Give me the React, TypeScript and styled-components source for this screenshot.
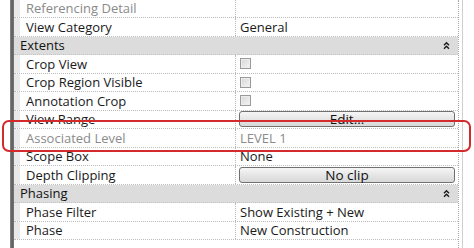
import styled, { createGlobalStyle } from "styled-components";

const Global = createGlobalStyle`
  html, body {
    margin: 0;
    padding: 0;
    background: #ffffff;
  }
  body {
    font-family: "Open Sans", "Noto Sans", "DejaVu Sans", sans-serif;
    font-size: 13px;
    color: #1c1c1c;
  }
`;

const Screen = styled.div`
  position: relative;
  width: 474px;
  height: 248px;
  overflow: hidden;
  display: flex;
  background: #ffffff;
`;

const Rail = styled.div`
  width: 4px;
  margin-left: 10px;
  background: linear-gradient(to right, #8a8a8a, #5c5c5c 50%, #7a7a7a);
`;

const Grid = styled.div`
  width: 444px;
  margin-top: -0.5px;
  border-right: 1px dotted #a8a8a8;
  align-self: flex-start;
  height: 260px;
`;

const Edge = styled.div`
  width: 3px;
  border-right: 1px solid #cfcfcf;
`;

const Row = styled.div`
  height: 18.5px;
  box-sizing: border-box;
  display: grid;
  grid-template-columns: 6px 216px 1fr;
  border-bottom: 1px dotted #bdbdbd;
  background: #ffffff;
`;

const Gutter = styled.div`
  background: #e9e9e9;
`;

const Name = styled.div<{ $dim?: boolean }>`
  display: flex;
  align-items: center;
  padding-left: 6px;
  border-right: 1px dotted #b5b5b5;
  color: ${(p) => (p.$dim ? "#8a8a8a" : "#1a1a1a")};
  white-space: nowrap;
  overflow: hidden;
`;

const Value = styled.div<{ $dim?: boolean }>`
  display: flex;
  align-items: center;
  padding: 0 3px 0 3px;
  color: ${(p) => (p.$dim ? "#8a8a8a" : "#1a1a1a")};
  white-space: nowrap;
  overflow: hidden;
`;

const ValueText = styled.span`
  padding-left: 1px;
`;

const Header = styled.div`
  height: 18.5px;
  box-sizing: border-box;
  display: flex;
  align-items: center;
  justify-content: space-between;
  padding: 0 8px 0 6px;
  background: #dcdcdc;
  border-bottom: 1px dotted #c4c4c4;
  color: #111111;
`;

const Check = styled.span`
  width: 9px;
  height: 9px;
  margin-left: 1px;
  border: 1px solid #9a9a9a;
  background: linear-gradient(135deg, #d6d6d6, #f4f4f4);
  box-shadow: inset 0 0 0 1px #ededed;
`;

const Button = styled.div`
  flex: 1;
  height: 16px;
  box-sizing: border-box;
  display: flex;
  align-items: center;
  justify-content: center;
  border: 1px solid #707070;
  border-radius: 3px;
  background: linear-gradient(to bottom, #f6f6f6, #e6e6e6 50%, #d8d8d8);
  color: #111111;
  font-size: 13.5px;
`;

const Highlight = styled.div`
  position: absolute;
  left: 2px;
  top: 120px;
  width: 469px;
  height: 32px;
  box-sizing: border-box;
  border: 2.5px solid #d42a2c;
  border-radius: 7px;
  pointer-events: none;
`;

const Collapse = () => (
  <svg width="7" height="9" viewBox="0 0 7 9">
    <path
      d="M1 4.2 L3.5 1.7 L6 4.2 M1 7.8 L3.5 5.3 L6 7.8"
      fill="none"
      stroke="#1a1a1a"
      strokeWidth="1.4"
    />
  </svg>
);

type Prop = {
  name: string;
  value?: string;
  kind?: "text" | "check" | "button";
  dim?: boolean;
};

const Property = ({ name, value, kind = "text", dim }: Prop) => (
  <Row>
    <Gutter />
    <Name $dim={dim}>{name}</Name>
    <Value $dim={dim}>
      {kind === "check" && <Check />}
      {kind === "button" && <Button>{value}</Button>}
      {kind === "text" && value && <ValueText>{value}</ValueText>}
    </Value>
  </Row>
);

export default function App() {
  return (
    <>
      <Global />
      <Screen>
        <Rail />
        <Grid>
          <Property name="Referencing Detail" dim />
          <Property name="View Category" value="General" />
          <Header>
            <span>Extents</span>
            <Collapse />
          </Header>
          <Property name="Crop View" kind="check" />
          <Property name="Crop Region Visible" kind="check" />
          <Property name="Annotation Crop" kind="check" />
          <Property name="View Range" value="Edit..." kind="button" />
          <Property name="Associated Level" value="LEVEL 1" dim />
          <Property name="Scope Box" value="None" />
          <Property name="Depth Clipping" value="No clip" kind="button" />
          <Header>
            <span>Phasing</span>
            <Collapse />
          </Header>
          <Property name="Phase Filter" value="Show Existing + New" />
          <Property name="Phase" value="New Construction" />
        </Grid>
        <Edge />
        <Highlight />
      </Screen>
    </>
  );
}
